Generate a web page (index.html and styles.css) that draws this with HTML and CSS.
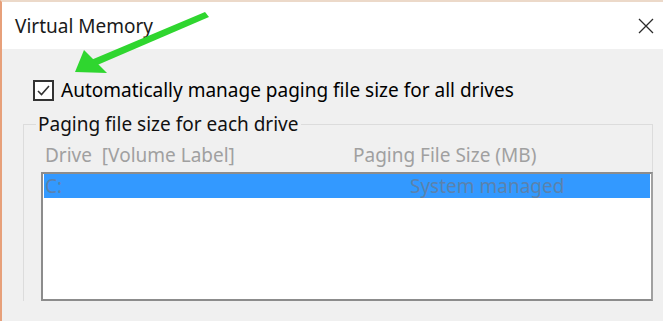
FILE: index.html
```html
<!DOCTYPE html>
<html lang="en">
<head>
  <meta charset="UTF-8" />
  <title>Virtual Memory</title>
  <link rel="stylesheet" href="styles.css">
</head>
<body>

<div class="window">
  <!-- Title bar -->
  <div class="titlebar">
    <span class="title">Virtual Memory</span>
    <svg class="close-icon" width="16" height="16" viewBox="0 0 16 16">
      <path d="M1 1 L15 15 M15 1 L1 15" stroke="#2b2b2b" stroke-width="1.3" fill="none" />
    </svg>
  </div>

  <!-- Dialog body -->
  <div class="content">
    <label class="auto-row">
      <span class="checkbox">
        <svg width="17" height="17" viewBox="0 0 17 17">
          <path d="M3 9 L6.5 12.5 L14 4" stroke="#333" stroke-width="1.6" fill="none" />
        </svg>
      </span>
      <span>Automatically manage paging file size for all drives</span>
    </label>

    <fieldset class="groupbox">
      <legend>Paging file size for each drive</legend>
      <div class="col-headers">
        <span>Drive&nbsp; [Volume Label]</span>
        <span>Paging File Size (MB)</span>
      </div>
      <div class="listbox">
        <div class="list-row selected">
          <span>C:</span>
          <span class="size-cell">System managed</span>
        </div>
      </div>
    </fieldset>
  </div>

  <!-- annotation arrow -->
  <svg class="arrow" width="150" height="80" viewBox="0 0 150 80">
    <path d="M143 10 L147 15 L33 64 L29 58 Z" fill="#2fd62f" />
    <path d="M13 70 L22 48 L45 71 Z" fill="#2fd62f" />
  </svg>
</div>

</body>
</html>
```

FILE: styles.css
```css
/* Global styles */
body {
  margin: 0;
  font-family: "Noto Sans", "Open Sans", sans-serif;
  color: #000;
  background-color: #f0f0f0;
  overflow: hidden;
}

.window {
  position: relative;
  height: 321px;
  box-sizing: border-box;
  border-top: 2px solid #ecd9c9;
  border-left: 2px solid #e7a07a;
  display: flex;
  flex-direction: column;
}

.titlebar {
  height: 47px;
  flex: none;
  background-color: #fff;
  display: flex;
  align-items: center;
  justify-content: space-between;
  padding: 0 9px 0 13px;
}

.title {
  font-size: 19px;
  color: #1a1a1a;
}

.content {
  flex: 1;
  background-color: #f0f0f0;
  padding: 0 10px 0 21px;
}

.auto-row {
  display: flex;
  align-items: center;
  margin: 28px 0 0 10px;
  font-size: 19px;
  gap: 7px;
}

.checkbox {
  width: 17px;
  height: 17px;
  border: 2px solid #333;
  background-color: #fff;
  display: flex;
}

.groupbox {
  margin: 8px 0 0;
  padding: 0 0 0 17px;
  border: 1px solid #dcdcdc;
  border-bottom: none;
  min-width: 0;
}

.groupbox legend {
  font-size: 19px;
  padding: 0 2px;
  margin-left: -5px;
  color: #111;
}

.col-headers {
  display: grid;
  grid-template-columns: 308px 1fr;
  padding: 4px 0 0 4px;
  font-size: 19px;
  color: #a0a0a0;
  height: 28px;
  line-height: 28px;
}

.listbox {
  margin: 3px -1px 0 0;
  height: 125px;
  border: 2px solid #8c8c8c;
  border-right-color: #a0a0a0;
  background-color: #fff;
  padding: 0 1px;
}

.list-row {
  display: grid;
  grid-template-columns: 308px 1fr;
  height: 24px;
  line-height: 24px;
  font-size: 19px;
  padding-left: 1px;
}

.list-row.selected {
  background-color: #3399ff;
  color: #5b82ad;
}

.size-cell {
  padding-left: 57px;
}

.arrow {
  position: absolute;
  left: 60px;
  top: 0;
}
```
